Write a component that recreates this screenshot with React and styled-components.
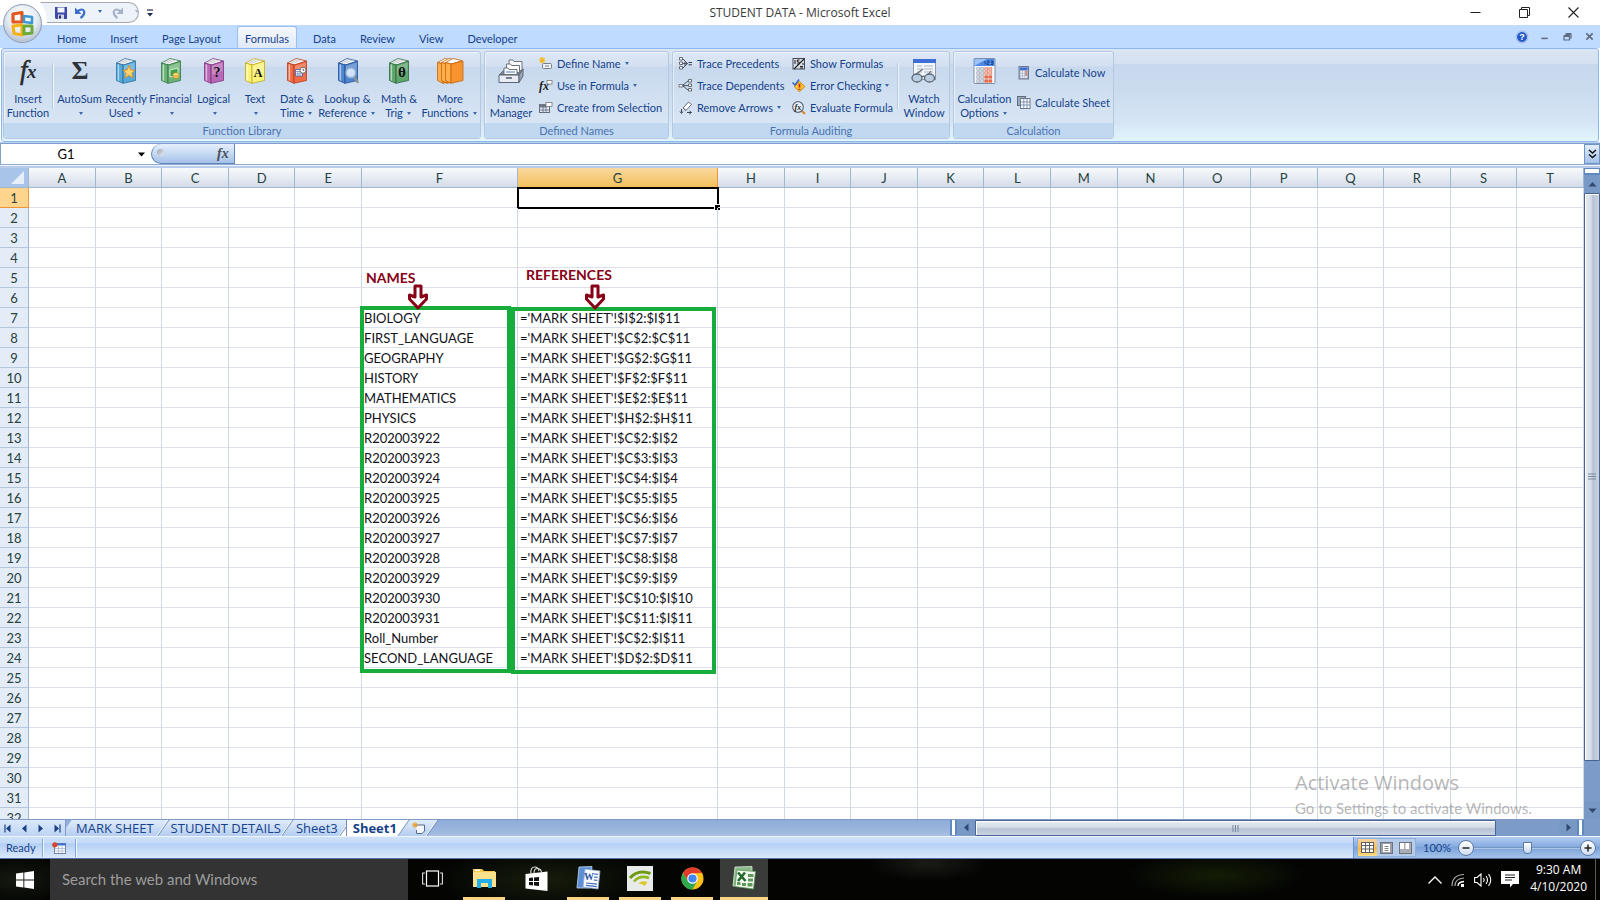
import React, { Fragment } from 'react';
import styled, { createGlobalStyle } from 'styled-components';

const GlobalStyle = createGlobalStyle`
    * { box-sizing: border-box; }
    body { margin: 0; background: #fff; overflow: hidden; }
    button, input { font: inherit; color: inherit; border: 0; padding: 0; margin: 0; background: none; outline: none; }
    svg { display: block; flex: none; overflow: visible; }
`

const Window = styled.div`
    display: flex;
    flex-direction: column;
    height: 100vh;
    position: relative;
    font-family: Lato, 'Open Sans', sans-serif;
    font-size: 11px;
    color: #15428b;
`

/* ---------- title bar ---------- */

const TitleBar = styled.header`
    display: grid;
    grid-template-columns: 1fr auto 1fr;
    align-items: center;
    height: 25px;
    flex: none;
    background: #fff;
`

const QuickAccess = styled.div`
    display: flex;
    align-items: center;
    height: 25px;
    padding-left: 40px;
    gap: 8px;
`

const QuickPill = styled.div`
    display: flex;
    align-items: center;
    gap: 8px;
    width: 99px;
    height: 21px;
    padding-left: 14px;
    background: #eef3fa;
    border: 1px solid #a5a9af;
    border-left-color: transparent;
    border-radius: 0 11px 11px 0;
    clip-path: polygon(0 0, 100% 0, 100% 100%, 7px 100%, 6px 50%);
`

const Title = styled.h1`
    margin: 0;
    font: 400 12px/24px 'Open Sans', sans-serif;
    color: #3a3a3a;
`

const WindowButtons = styled.div`
    display: flex;
    justify-content: flex-end;
    align-items: center;
    align-self: center;
    gap: ${props => props.$gap}px;
    padding-right: ${props => props.$right}px;
    margin-left: auto;
`

const OfficeButton = styled.button`
    position: absolute;
    left: 3px;
    top: 4px;
    width: 39px;
    height: 39px;
    border-radius: 50%;
    border: 1px solid #8d9bb0;
    background: radial-gradient(circle at 50% 35%, #fff 10%, #e3e9f2 50%, #b9c5d8 75%, #f4f7fb 100%);
    display: flex;
    align-items: center;
    justify-content: center;
    z-index: 2;
`

/* ---------- ribbon ---------- */

const TabBar = styled.nav`
    display: flex;
    align-items: flex-end;
    height: 23px;
    flex: none;
    padding-left: 45px;
    background: #bfdbff;
`

const RibbonTab = styled.button`
    height: 22px;
    padding: 2px 12px 0;
    font-size: 11px;
    ${props => props.$active && `
        margin: 0 4px;
        padding: 2px 7px 0;
        position: relative;
        background: linear-gradient(#f6f9fe, #dfe9f6);
        border: 1px solid #9cbfee;
        border-bottom: 0;
        border-radius: 3px 3px 0 0;
    `}
`

const Ribbon = styled.section`
    display: flex;
    gap: 3px;
    height: 94px;
    flex: none;
    margin: 0 1px;
    padding: 2px 1px;
    border: 1px solid #8db8ec;
    border-radius: 3px;
    background: linear-gradient(#dbe6f4 0, #d4e0f0 16%, #c7d8ed 17%, #cbdcef 45%, #d5e5f5 80%, #e2f6fe 100%);
`

const RibbonEdge = styled.div`
    height: 2px;
    flex: none;
    background: linear-gradient(#bad0ee 50%, #7fa0cc 50%);
`

const Group = styled.div`
    display: flex;
    flex-direction: column;
    border: 1px solid #b4c8e0;
    border-radius: 3px;
    box-shadow: inset 1px 1px 0 rgba(255, 255, 255, .5);
    background: linear-gradient(#dde8f5 0, #d3e0f1 16%, #c8d9ee 18%, #d0dff1 50%, #dbe8f6 100%);
`

const GroupBody = styled.div`
    display: flex;
    height: 71px;
    padding: 0 2px;
`

const GroupLabel = styled.div`
    height: 15px;
    line-height: 15px;
    text-align: center;
    color: #4a72b0;
    background: #c1d8f1;
    border-radius: 0 0 3px 3px;
`

const BigButton = styled.button`
    display: flex;
    flex-direction: column;
    align-items: center;
    width: ${props => props.$width}px;
    padding-top: 6px;
    line-height: 14px;
    white-space: nowrap;
`

const BigIcon = styled.span`
    display: flex;
    justify-content: center;
    height: 26px;
    margin-bottom: 8px;
`

const Divider = styled.span`
    width: 2px;
    height: 46px;
    margin: 11px 2px 0;
    background: linear-gradient(90deg, #b7cae2 50%, #eef5fd 50%);
`

const SmallColumn = styled.div`
    display: flex;
    flex-direction: column;
    justify-content: ${props => props.$spread ? 'center' : 'flex-start'};
    gap: ${props => props.$spread ? '8px' : '0'};
    width: ${props => props.$width}px;
    padding-left: 4px;
`

const SmallButton = styled.button`
    display: flex;
    align-items: center;
    gap: 5px;
    height: 22px;
    white-space: nowrap;
`

const Caret = styled.i`
    display: inline-block;
    border: 2px solid transparent;
    border-top: 3px solid ${props => props.$color || '#3f66a8'};
    border-bottom: 0;
    margin: 0 2px 2px 4px;
    vertical-align: middle;
`

/* ---------- formula bar ---------- */

const FormulaBar = styled.div`
    display: flex;
    height: 20px;
    flex: none;
    background: #fff;
    border-left: 1px solid #7fa0cc;
`

const NameBox = styled.input`
    width: 130px;
    text-align: center;
    font-size: 13px;
    color: #000;
`

const NameCaret = styled.button`
    width: 20px;
`

const FxBox = styled.div`
    display: flex;
    align-items: center;
    justify-content: space-between;
    width: 84px;
    padding: 0 6px 0 5px;
    border: 1px solid #5f87bb;
    border-width: 0 1px 1px;
    border-radius: 11px 0 0 11px;
    background: linear-gradient(#e6effb, #c6d9f3 50%, #a6c1e8);
`

const Knob = styled.span`
    width: 7px;
    height: 7px;
    margin-bottom: 2px;
    border-radius: 50%;
    background: linear-gradient(135deg, #9ea6b3, #e6ebf2);
`

const FormulaInput = styled.input`
    flex: 1;
    min-width: 0;
    padding: 0 4px;
    font-size: 13px;
    color: #000;
`

const ExpandButton = styled.button`
    display: flex;
    align-items: center;
    justify-content: center;
    width: 16px;
    border: 1px solid #6d93c8;
    background: linear-gradient(#e3edfa, #a5c0e8);
`

const BarEdge = styled.div`
    height: 4px;
    flex: none;
    background: linear-gradient(#8fabd2 25%, #edf4fd 25%, #edf4fd 50%, #b9cdea 50%);
`

/* ---------- sheet ---------- */

const SheetArea = styled.main`
    display: flex;
    flex: 1;
    min-height: 0;
`

const SheetView = styled.div`
    flex: 1;
    position: relative;
    overflow: hidden;
    background: #fff;
`

const Grid = styled.table`
    width: 100%;
    table-layout: fixed;
    border-collapse: separate;
    border-spacing: 0;
    font-size: 13px;
    line-height: 18px;
`

const Corner = styled.th`
    padding: 0;
    background: #a9c4e9;
    border-right: 1px solid #9eb6ce;
    border-bottom: 1px solid #9eb6ce;
`

const CornerMark = styled.span`
    display: block;
    width: 13px;
    height: 13px;
    margin-left: 11px;
    background: #e6eef9;
    clip-path: polygon(100% 0, 100% 100%, 0 100%);
`

const ColumnHead = styled.th`
    height: 20px;
    padding: 1px 0 0;
    font-weight: 400;
    color: #27413e;
    background: ${props => props.$on ? 'linear-gradient(#f9d99f, #f3c05c)' : 'linear-gradient(#f8fafc, #e3e9f1 60%, #d3dbe8)'};
    border-right: 1px solid ${props => props.$on ? '#f29536' : '#9eb6ce'};
    border-bottom: 1px solid ${props => props.$on ? '#f29536' : '#9eb6ce'};
`

const RowHead = styled.th`
    height: 20px;
    padding: 1px 0 0;
    font-weight: 400;
    color: #27413e;
    background: ${props => props.$on ? '#ffd58d' : '#e4ecf7'};
    border-right: 1px solid ${props => props.$on ? '#f29536' : '#9eb6ce'};
    border-bottom: 1px solid ${props => props.$on ? '#f29536' : '#b6c6dc'};
`

const Cell = styled.td`
    height: 20px;
    padding: 1px 0 0 2px;
    color: #101018;
    white-space: nowrap;
    border-right: 1px solid #d0d7e5;
    border-bottom: 1px solid #dce0ea;
    position: relative;
`

const Selection = styled.span`
    position: absolute;
    inset: -1px -2px -2px -1px;
    border: 2px solid #000;
    &::after {
        content: '';
        position: absolute;
        right: -3px;
        bottom: -3px;
        width: 5px;
        height: 5px;
        background: #000;
        border: 1px solid #fff;
        border-width: 1px 0 0 1px;
    }
`

// drawn over the cells, like shapes inserted on the sheet
const GreenBox = styled.div`
    position: absolute;
    left: ${props => props.$left}px;
    top: ${props => props.$top}px;
    width: ${props => props.$width}px;
    height: 367px;
    border: 4px solid #16ad3c;
`

const Callout = styled.div`
    position: absolute;
    left: ${props => props.$left}px;
    top: ${props => props.$top}px;
    font-size: 14px;
    line-height: 18px;
    font-weight: 700;
    color: #880015;
`

const CalloutArrow = styled.svg`
    position: absolute;
    left: ${props => props.$left}px;
    top: 116px;
`

const Watermark = styled.div`
    position: absolute;
    right: 52px;
    bottom: 0;
    width: 237px;
    color: rgba(120, 120, 120, .55);
    font-size: 15px;
    line-height: 22px;
    white-space: nowrap;
`

const WatermarkTitle = styled.div`
    font: 400 20px/28px 'Open Sans', sans-serif;
`

const VScroll = styled.div`
    display: flex;
    flex-direction: column;
    width: 16px;
    background: #7c9bc8;
`

const Splitter = styled.span`
    flex: none;
    width: ${props => props.$vertical ? '7px' : '16px'};
    height: ${props => props.$vertical ? '15px' : '7px'};
    background: #fff;
    border: 2px solid #5f8ac0;
    border-width: ${props => props.$vertical ? '0 2px' : '1px 1px 2px'};
`

const ScrollButton = styled.button`
    display: flex;
    align-items: center;
    justify-content: center;
    flex: none;
    width: ${props => props.$width}px;
    height: ${props => props.$height}px;
    background: #7898c6;
`

const Thumb = styled.div`
    display: flex;
    align-items: center;
    justify-content: center;
    flex: ${props => props.$grow} 1 0;
    border: 1px solid #48638f;
    border-radius: 1px;
    background: linear-gradient(${props => props.$angle}, #e9edf3, #d4dbe5 45%, #b6c3d6 55%, #c9d3e2);
    box-shadow: inset 1px 1px 0 #fff;
`

const Track = styled.div`
    flex: ${props => props.$grow} 1 0;
`

/* ---------- sheet tabs ---------- */

const SheetBar = styled.div`
    display: flex;
    height: 17px;
    flex: none;
    border-top: 1px solid #7d9bc6;
    background: linear-gradient(#8fadd9, #9cb7de 70%, #a9c1e4);
`

const SheetNav = styled.div`
    display: flex;
    align-items: center;
    justify-content: space-around;
    width: 66px;
    z-index: 2;
    border-right: 1px solid #7d9bc6;
    background: linear-gradient(#dbe9fb, #bcd4f4);
`

const SheetTab = styled.button`
    position: relative;
    padding: 0 ${props => props.$pad}px;
    font: ${props => props.$active ? 700 : 400} 13px/15px 'Open Sans', sans-serif;
    white-space: nowrap;
    z-index: ${props => props.$active ? 1 : 0};
    &::before {
        content: '';
        position: absolute;
        inset: 0;
        z-index: -1;
        transform: skewX(-35deg);
        background: ${props => props.$active ? '#fff' : 'linear-gradient(#e0ecfb, #b5cdf0)'};
        border-right: 1px solid #7590b8;
        box-shadow: inset -1px 0 0 #fff;
    }
    &::after {
        content: '';
        position: absolute;
        inset: 0 50% 0 0;
        z-index: -1;
        background: ${props => props.$active ? '#fff' : 'none'};
        border-left: ${props => props.$active ? '1px solid #7590b8' : '0'};
    }
`

const HScroll = styled.div`
    display: flex;
    width: calc(40% + 10px);
    margin-left: auto;
    padding-right: 16px;
    background: #7c9bc8;
`

/* ---------- status bar ---------- */

const StatusBar = styled.footer`
    display: flex;
    align-items: center;
    height: 23px;
    flex: none;
    border-top: 1px solid #eef5fe;
    border-bottom: 1px solid #56739f;
    background: linear-gradient(#cfe1f9, #c3daf7 30%, #b1cef4 32%, #c4daf6 60%, #d9e8fb);
`

const StatusItem = styled.div`
    display: flex;
    align-items: center;
    height: 18px;
    padding: 0 ${props => props.$pad}px;
    border-right: 1px solid #86a7d4;
    box-shadow: 1px 0 0 #eef5fe;
`

const ZoomArea = styled.div`
    display: flex;
    align-items: center;
    width: 247px;
    height: 21px;
    margin-left: auto;
    padding: 0 4px 0 3px;
    border-left: 1px solid #6f93c8;
    background: linear-gradient(#b3cdf1, #87acdf 45%, #7ba3da 50%, #a5c3ea);
`

const Views = styled.div`
    display: flex;
    height: 19px;
    border: 1px solid #8fb0dd;
    background: #b4cbea;
`

const ViewButton = styled.button`
    display: flex;
    align-items: center;
    justify-content: center;
    width: 19px;
    background: ${props => props.$on ? 'linear-gradient(#f6d3a2, #fbb84b 60%, #ffe08a)' : 'none'};
`

const ZoomLabel = styled.label`
    width: 42px;
    text-align: center;
`

const RoundButton = styled.button`
    display: flex;
    align-items: center;
    justify-content: center;
    width: 16px;
    height: 16px;
    flex: none;
    border: 1px solid #5b79a6;
    border-radius: 50%;
    background: linear-gradient(#fff, #cfddf0);
`

const ZoomSlider = styled.input`
    flex: 1;
    min-width: 0;
    height: 14px;
    appearance: none;
    background: linear-gradient(#5c7fb4, #c9dcf5) no-repeat 0 6px / 100% 2px;
    &::-webkit-slider-thumb {
        appearance: none;
        width: 9px;
        height: 12px;
        background: linear-gradient(#fff, #c6d6ec);
        border: 1px solid #5b79a6;
        border-radius: 1px 1px 5px 5px;
    }
`

/* ---------- taskbar ---------- */

const Taskbar = styled.div`
    display: flex;
    height: 41px;
    flex: none;
    color: #fff;
    background:
        radial-gradient(ellipse 60px 18px at 58% 10%, rgba(60, 60, 50, .4), transparent),
        radial-gradient(ellipse 90px 22px at 76% 40%, rgba(30, 44, 8, .6), transparent),
        radial-gradient(ellipse 110px 30px at 34% 50%, rgba(26, 34, 14, .8), transparent),
        radial-gradient(ellipse 60px 24px at 1% 50%, rgba(22, 28, 16, .9), transparent),
        #040503;
`

const StartButton = styled.button`
    display: flex;
    align-items: center;
    justify-content: center;
    width: 50px;
`

const SearchInput = styled.input`
    width: 358px;
    padding: 0 12px 2px;
    font-size: 15px;
    color: #fff;
    background: #333;
    &::placeholder { color: #9d9d9d; opacity: 1; }
`

const TaskButtons = styled.div`
    display: flex;
    gap: 4px;
`

const TaskButton = styled.button`
    display: flex;
    align-items: center;
    justify-content: center;
    width: 48px;
    border-bottom: 3px solid transparent;
    background: ${props => props.$active ? '#393c38' : 'none'};
    position: relative;
    &::after {
        content: '';
        display: ${props => props.$open || props.$active ? 'block' : 'none'};
        position: absolute;
        left: ${props => props.$active ? 0 : '3px'};
        right: ${props => props.$active ? 0 : '3px'};
        bottom: -3px;
        height: 3px;
        background: #fbd581;
    }
`

const Tray = styled.div`
    display: flex;
    align-items: center;
    margin-left: auto;
    gap: 9px;
    padding-right: 4px;
`

const Clock = styled.div`
    height: 41px;
    font: 400 12px/17px 'Open Sans', sans-serif;
    text-align: center;
    padding: 2px 8px 0 0;
    margin-left: 2px;
    border-right: 1px solid #5a5a5a;
`

/* ---------- icons ---------- */

const Book = ({ fill, dark, children }) => (
    <svg width="20" height="26" viewBox="0 0 20 26">
        <path d="M0.5 5 L9 0.5 L19.5 3 L8 7 Z" fill="#fdfdfd" stroke={dark} strokeWidth="0.8" />
        <path d="M4 4.6 L11 1.6 M6 5.4 L14 2.2" stroke="#9aa4b0" strokeWidth="0.6" />
        <path d="M0.5 5 L7 7 V25.3 L0.5 22.5 Z" fill={fill} stroke={dark} strokeWidth="0.8" />
        <path d="M2.4 6.4 V22.6" stroke="#fff" strokeOpacity="0.55" strokeWidth="1.4" />
        <path d="M7 7 L19.5 3.2 V22.5 L7 25.3 Z" fill={fill} stroke={dark} strokeWidth="0.8" />
        <path d="M8 8 L18.6 4.6 V13 L8 17 Z" fill="#fff" fillOpacity="0.22" />
        {children}
    </svg>
);

const Glyph = ({ size, children, fill }) => (
    <text x="13" y="19" textAnchor="middle" fontFamily="Liberation Serif" fontWeight="700" fontSize={size} fill={fill || '#111'}>{children}</text>
);

const FxIcon = () => (
    <svg width="24" height="26" viewBox="0 0 24 26">
        <text x="4" y="21" fontFamily="Liberation Serif" fontStyle="italic" fontSize="27" fill="#2b2b2b" stroke="#2b2b2b" strokeWidth="0.5">f</text>
        <text x="11" y="20" fontFamily="Liberation Serif" fontStyle="italic" fontWeight="700" fontSize="19" fill="#2b2b2b">x</text>
    </svg>
);

const SigmaIcon = () => (
    <svg width="20" height="26" viewBox="0 0 20 26">
        <text x="10" y="21" textAnchor="middle" fontFamily="Liberation Serif" fontWeight="700" fontSize="26" fill="#2f3338">Σ</text>
    </svg>
);

const StarBook = () => (
    <Book fill="#56a9d8" dark="#2c6f9f">
        <path d="M13 7.5 L14.8 12 L19 12.2 L15.8 15.2 L17 20 L13 17.2 L9 20 L10.2 15.2 L7 12.2 L11.2 12 Z" fill="#ffd36b" stroke="#e08a1c" strokeWidth="0.9" />
    </Book>
);

const MoneyBook = () => (
    <Book fill="#6fb277" dark="#2f7a42">
        <path d="M9 12 L17 10 V17 L9 19 Z" fill="#3f9f4c" stroke="#dff2d8" strokeWidth="0.9" />
        <ellipse cx="15" cy="18.5" rx="3" ry="1.8" fill="#ffd257" stroke="#b3861b" strokeWidth="0.7" />
        <ellipse cx="15" cy="16.4" rx="3" ry="1.6" fill="#ffe58a" stroke="#b3861b" strokeWidth="0.7" />
    </Book>
);

const DateBook = () => (
    <Book fill="#ee6b45" dark="#b93a1b">
        <path d="M8.5 11.5 H15.5 V18 H8.5 Z" fill="#fff" stroke="#3c5ea8" strokeWidth="0.8" />
        <path d="M8.5 13.5 H15.5 M10.8 13 V18 M13 13 V18 M8.5 15.8 H15.5" stroke="#5b7fc4" strokeWidth="0.7" />
        <circle cx="16" cy="12.2" r="3" fill="#fff" stroke="#555" strokeWidth="0.8" />
        <path d="M16 10.6 V12.3 H17.4" stroke="#222" strokeWidth="0.7" fill="none" />
    </Book>
);

const LookupBook = () => (
    <Book fill="#4f86d0" dark="#244f94">
        <path d="M15.8 18.4 L19.6 24" stroke="#8d8f96" strokeWidth="2.4" strokeLinecap="round" />
        <circle cx="12.8" cy="14.8" r="4.8" fill="#cfe3fb" stroke="#9fb2cc" strokeWidth="1.5" />
    </Book>
);

const MoreBooks = () => (
    <svg width="27" height="26" viewBox="0 0 27 26">
        {[0, 4, 8].map(x => (
            <g key={x} transform={`translate(${x} 0)`}>
                <path d="M0.5 4.5 L8 0.5 L17 2.5 L7 6 Z" fill="#fff" stroke="#c4650c" strokeWidth="0.8" />
                <path d="M0.5 4.5 L6 6 V25.3 L0.5 22.5 Z" fill="#ffae4a" stroke="#c4650c" strokeWidth="0.8" />
                <path d="M6 6 L18 3 V22.5 L6 25.3 Z" fill="#f9932f" stroke="#c4650c" strokeWidth="0.8" />
            </g>
        ))}
    </svg>
);

const NameManagerIcon = () => (
    <svg width="26" height="26" viewBox="0 0 26 26">
        <path d="M1 17 L7 11 H25 L22 17 Z" fill="#7e8796" stroke="#555e6d" strokeWidth="0.8" />
        <path d="M11 2 h4 l1 1.5 h8 v9 h-13 z" fill="#f7f8fa" stroke="#6e7581" />
        <path d="M8.5 6 h4 l1 1.5 h8 v7 h-13 z" fill="#fff" stroke="#6e7581" />
        <path d="M6 10 h4 l1 1.5 h8 v5 h-13 z" fill="#fff" stroke="#6e7581" />
        <path d="M8 14 H17" stroke="#4d79c0" />
        <path d="M1 17 H21 V24.5 H1 Z" fill="#e9edf3" stroke="#5d6676" />
        <path d="M21 17 L25 11 V18 L21 24.5 Z" fill="#9aa4b4" stroke="#5d6676" />
        <path d="M8 20 H14" stroke="#5d6676" strokeWidth="1.6" />
    </svg>
);

const WatchIcon = () => (
    <svg width="26" height="26" viewBox="0 0 26 26">
        <rect x="2.5" y="1.5" width="22" height="20" fill="#f3f6fa" stroke="#8d9bb0" />
        <rect x="2" y="1" width="23" height="4" fill="#3d6fd6" />
        <path d="M6 8 H11 M13 8 H22 M6 11 H11 M13 11 H22 M13 14 H22 M6 14 H11" stroke="#a8b4c6" />
        <path d="M4 17 L12 11 M16 18 L20 13" stroke="#666d78" strokeWidth="1.2" />
        <ellipse cx="6" cy="20" rx="5" ry="4" fill="#b9cde0" stroke="#5b6572" strokeWidth="1.3" />
        <ellipse cx="18.5" cy="20" rx="5" ry="4" fill="#b9cde0" stroke="#5b6572" strokeWidth="1.3" />
        <path d="M11 19 q1.3 -1.6 2.6 0" fill="none" stroke="#5b6572" strokeWidth="1.3" />
    </svg>
);

const CalcOptionsIcon = () => (
    <svg width="23" height="26" viewBox="0 0 23 26">
        <rect x="1" y="0.5" width="21" height="25" rx="1" fill="#f6f8fb" stroke="#7d8fae" />
        <rect x="1.5" y="1" width="20" height="7" fill="#4d8be6" />
        <path d="M2 7.5 L14 1 H2 Z" fill="#9cc4fa" />
        <path d="M12 3 V6.500 M14 3 H16 V4.700 H14 V6.500 H16.200 M17.800 3 H20 V6.500 H17.800 M18 4.700 H20" fill="none" stroke="#153f86" strokeWidth="0.900" />
        {[10, 14, 18, 22].map(y => [3, 7, 11, 15].map(x => (
            <rect key={`${x}-${y}`} x={x + 0.8} y={y - 0.2} width="3" height="2.4" fill={x > 10 ? (y > 15 ? '#ef6a4c' : '#f8c9b8') : '#dfe4ec'} stroke={x > 10 ? '#d9603f' : '#8b95a5'} strokeWidth="0.6" />
        )))}
    </svg>
);

const smallIcons = {
    define: <Fragment><rect x="3.5" y="6.5" width="9" height="5" rx="1" fill="#eef1f6" stroke="#7a7f88" /><path d="M6 9 H10" stroke="#7a7f88" /><path d="M3 0 V6.5 M0 3.2 H6.5 M1 1 L5.5 5.5 M5.5 1 L1 5.5" stroke="#f5b81c" strokeWidth="1.1" /></Fragment>,
    use: <Fragment><text x="0" y="11" fontFamily="Liberation Serif" fontStyle="italic" fontWeight="700" fontSize="12" fill="#222">fx</text><rect x="8" y="1.5" width="5" height="3.5" fill="#fff" stroke="#777" strokeWidth="0.8" /></Fragment>,
    create: <Fragment><rect x="0.5" y="3.5" width="10" height="8" fill="#e5eaf2" stroke="#5f6b7e" /><rect x="0.5" y="3" width="7" height="3.5" fill="#6e7888" /><path d="M1 9 H10 M4 4 V11 M7 4 V11" stroke="#5f6b7e" strokeWidth="0.8" /><rect x="7" y="1.5" width="6" height="4" fill="#fff" stroke="#777" strokeWidth="0.8" /></Fragment>,
    precedents: <Fragment><path d="M0.5 0.5 h3 v2.5 h-3 z M0.5 5 h3 v2.5 h-3 z M0.5 9.5 h3 v2.5 h-3 z" fill="#fff" stroke="#555d68" strokeWidth="0.9" /><path d="M4 2 L8 6 M4 11 L8 7 M4 6.6 H9 M6 4.5 V8.7" stroke="#39404a" strokeWidth="0.9" /><path d="M9.5 5.5 H13 M9.5 7.8 H13" stroke="#39404a" /></Fragment>,
    dependents: <Fragment><path d="M9.5 0.5 h3 v2.5 h-3 z M9.5 5 h3 v2.5 h-3 z M9.5 9.5 h3 v2.5 h-3 z" fill="#fff" stroke="#555d68" strokeWidth="0.9" /><path d="M4 6 L9 2 M4 7 L9 11 M4 6.6 H9" stroke="#39404a" strokeWidth="0.9" /><path d="M0 5.5 H3.5 V8 H0 Z" fill="#fff" stroke="#555d68" strokeWidth="0.8" /></Fragment>,
    remove: <Fragment><path d="M4 7 L9.5 1 L12.5 3.5 L7 9.5 Z" fill="#fff" stroke="#666d78" /><path d="M4 7 L7 9.5" stroke="#666d78" /><path d="M2.5 8 V11.5 M1 10.5 L2.5 12.5 L4 10.5 M8 11.5 H12 M10.5 10 L12.5 11.5 L10.5 13" stroke="#39404a" fill="none" /></Fragment>,
    show: <Fragment><rect x="1" y="1.5" width="11.5" height="10.5" fill="#d8dde5" stroke="#444b56" /><path d="M3 3 V7 M7.5 3 H5.300 V5 H7.200 V7 H5" fill="none" stroke="#222" /><path d="M2 12 L12 2" stroke="#222" strokeWidth="1.1" /><path d="M8 9.5 h3 M8 11 h3 M10 7 h2" stroke="#222" /></Fragment>,
    error: <Fragment><path d="M7.5 2.5 L12.8 7.5 L7.5 12.8 L2.2 7.5 Z" fill="#ffc62e" stroke="#c98209" /><path d="M7.5 4.8 V8.6 M7.5 9.8 V11" stroke="#d0201a" strokeWidth="1.8" /><path d="M0.5 3.5 L3 6 L7 0.5" fill="none" stroke="#3b69c6" strokeWidth="1.6" /></Fragment>,
    evaluate: <Fragment><path d="M9.5 9.5 L13 13" stroke="#d98a2c" strokeWidth="2.2" /><circle cx="6" cy="6" r="5.3" fill="#eaf3fc" stroke="#5f6b7e" strokeWidth="1.2" /><text x="2.5" y="9" fontFamily="Liberation Serif" fontStyle="italic" fontWeight="700" fontSize="8" fill="#222">fx</text></Fragment>,
    calcNow: <Fragment><rect x="2" y="0.5" width="9.5" height="12.5" fill="#a7b4c8" stroke="#6d7a90" /><rect x="3" y="1.5" width="7.5" height="2.5" fill="#3d6fd6" /><path d="M3.5 6 H10 M3.5 8.5 H10 M3.5 11 H10" stroke="#fff" strokeWidth="1.6" strokeDasharray="1.6 0.8" /><path d="M8.3 6 H10 M8.3 8.5 H10" stroke="#e0533a" strokeWidth="1.6" /></Fragment>,
    calcSheet: <Fragment><rect x="0.5" y="0.5" width="8" height="9" fill="#9aa8c0" stroke="#5f6b7e" /><rect x="3.5" y="2.5" width="9.5" height="10" fill="#fff" stroke="#6d7a90" /><path d="M4 6 H13 M4 9 H13 M6.8 3 V12 M10 3 V12" stroke="#7f93b8" /></Fragment>,
};

const Arrow = ({ dir, bar, color = '#1a3f80' }) => {
    const turn = { right: 0, down: 90, left: 180, up: 270 }[dir];
    return (
        <svg width="9" height="9" viewBox="0 0 9 9">
            <g transform={`rotate(${turn} 4.5 4.5)`}>
                <path d="M2.5 0.5 L7 4.5 L2.5 8.5 Z" fill={color} />
                {bar && <path d="M8 0.5 V8.5" stroke={color} strokeWidth="1.2" />}
            </g>
        </svg>
    );
};

const OfficeLogo = () => (
    <svg width="25" height="27" viewBox="0 0 25 27">
        <path d="M3 4 L12 2.500 V12 L3 12 Z" fill="none" stroke="#e2571e" strokeWidth="3.200" strokeLinejoin="round" />
        <path d="M14 6 L22 7 V13 L14 12 Z" fill="none" stroke="#3e97d3" strokeWidth="2.6" strokeLinejoin="round" />
        <path d="M3 16 L12 15 V25 L4 23.500 Z" fill="none" stroke="#f5b21b" strokeWidth="3.200" strokeLinejoin="round" />
        <path d="M14 16 L22 16 V23 L14 24 Z" fill="none" stroke="#6cab3a" strokeWidth="3" strokeLinejoin="round" />
    </svg>
);

const SaveIcon = () => (
    <svg width="12" height="12" viewBox="0 0 12 12">
        <path d="M0 0 H12 V12 H1 L0 11 Z" fill="#4049a8" />
        <rect x="2.5" y="0.5" width="7" height="5" fill="#f2f5fb" />
        <rect x="3" y="7.5" width="6" height="4.5" fill="#cfd5e6" />
        <rect x="4" y="8.5" width="2" height="3" fill="#262c66" />
    </svg>
);

const UndoIcon = ({ flip }) => (
    <svg width="11" height="12" viewBox="0 0 11 12">
        <g transform={flip ? 'translate(11 0) scale(-1 1)' : undefined}>
            <path d="M2 4.5 Q8 0.5 9.2 4.5 Q9.6 8 5.5 11" fill="none" stroke={flip ? '#a3b2c8' : '#3b6fc9'} strokeWidth="2.2" />
            <path d="M0 0.5 V7 H6.5 Z" fill={flip ? '#a3b2c8' : '#3b6fc9'} />
        </g>
    </svg>
);

const MinIcon = ({ small }) => <svg width={small ? 7 : 11} height="11" viewBox="0 0 11 11"><path d={small ? 'M-1 8.5 H9' : 'M0.5 5.5 H10.5'} stroke={small ? '#5e6b80' : '#222'} strokeWidth={small ? 2.4 : 1} /></svg>;

const RestoreIcon = () => (
    <svg width="11" height="11" viewBox="0 0 11 11">
        <path d="M0.5 2.5 H8.5 V10.5 H0.5 Z M2.5 2.5 V0.5 H10.5 V8.5 H8.5" fill="none" stroke="#222" />
    </svg>
);

const SmallRestoreIcon = () => (
    <svg width="9" height="8" viewBox="0 0 9 8">
        <path d="M1 3 H6.5 V7 H1 Z M3 3 V1 H8 V5 H7" fill="none" stroke="#5e6b80" strokeWidth="1.2" />
        <path d="M1 3 H6.5 M3 1 H8" stroke="#5e6b80" strokeWidth="2" />
    </svg>
);

const CloseIcon = ({ small }) => (
    <svg width={small ? 7 : 11} height={small ? 7 : 11} viewBox="0 0 11 11">
        <path d="M0.5 0.5 L10.5 10.5 M10.5 0.5 L0.5 10.5" stroke={small ? '#5e6b80' : '#222'} strokeWidth={small ? 2.6 : 1.1} />
    </svg>
);

const HelpIcon = () => (
    <svg width="12" height="12" viewBox="0 0 12 12">
        <circle cx="6" cy="6" r="5.5" fill="#2358c8" stroke="#dfeafb" />
        <circle cx="6" cy="6" r="5.9" fill="none" stroke="#6c8fc8" strokeWidth="0.5" />
        <text x="6" y="9.2" textAnchor="middle" fontFamily="Liberation Sans" fontWeight="700" fontSize="9" fill="#fff">?</text>
    </svg>
);

const WordIcon = () => (
    <svg width="25" height="24" viewBox="0 0 25 24">
        <path d="M3 1 L16 0.5 L14 22 H1 Z" fill="#5d8fd6" stroke="#c9dcf3" strokeWidth="0.8" />
        <path d="M9 3 L24 5 L22 23 L7 21 Z" fill="#fbfcff" stroke="#8aa9d8" strokeWidth="0.8" />
        <path d="M18 8 L22 8.4 M18 11 L21.7 11.4 M17.6 14 L21.4 14.4 M10 17 L21 18.2 M10 19.4 L20.8 20.6" stroke="#3c68b8" strokeWidth="1.2" />
        <text x="13" y="14" textAnchor="middle" fontFamily="Liberation Serif" fontWeight="700" fontSize="10" fill="#2a56a8">W</text>
    </svg>
);

const ExcelIcon = () => (
    <svg width="24" height="24" viewBox="0 0 24 24">
        <path d="M3 1 L20 0.5 L20 20 L1 20 Z" fill="#8cb98c" stroke="#d8ead5" strokeWidth="0.8" />
        <path d="M5 4 L23.5 5.5 L21.5 23 L3 20.5 Z" fill="#f5faf3" stroke="#5c9a58" strokeWidth="0.8" />
        <path d="M16 8 h5.5 v3 h-5.5 z M16 12.5 h5 v3 h-5 z M15.5 17 h5 v3.5 h-5 z M10 17 h4 v3 h-4 z M5 16 h3.5 v3 h-3.5 z" fill="#5c9a58" />
        <path d="M6 6.5 L13.5 15 M13 6.5 L6 15" stroke="#246a2c" strokeWidth="2.6" />
    </svg>
);

const WifiAppIcon = () => (
    <svg width="26" height="25" viewBox="0 0 26 25">
        <rect width="26" height="25" fill="#e9ebea" />
        <path d="M3 12 Q11 3 23.500 7.500" fill="none" stroke="#6d9a10" strokeWidth="3.2" />
        <path d="M7 15.500 Q13 8.500 22 12" fill="none" stroke="#8fb81a" strokeWidth="2.6" />
        <path d="M11 17.500 Q15 14 20.5 16 L17.5 20 Q15 17 11 17.500" fill="#dcc72a" />
    </svg>
);

const ChromeIcon = () => (
    <svg width="23" height="23" viewBox="0 0 24 24">
        <circle cx="12" cy="12" r="11.5" fill="#fbc116" />
        <path d="M2.040 6.250 A11.5 11.5 0 0 1 21.960 6.250 L12 6.5 L7.2 14.7 Z" fill="#e33b2e" />
        <path d="M2.040 6.250 A11.5 11.5 0 0 0 12 23.5 L16.8 14.7 L7.2 14.7 Z" fill="#2da94f" />
        <circle cx="12" cy="12" r="5.5" fill="#fff" />
        <circle cx="12" cy="12" r="4.3" fill="#4285f4" />
    </svg>
);

const ExplorerIcon = () => (
    <svg width="23" height="20" viewBox="0 0 23 20">
        <path d="M0 1 H9 L11 3 H22 V19 H0 Z" fill="#f5c84b" />
        <rect x="0" y="4" width="23" height="15" fill="#fde08a" />
        <path d="M4 20 V11 H19 V20 H15 V15 H8 V20 Z" fill="#22aee8" />
        <rect x="2" y="1.5" width="5" height="1.5" fill="#fff" />
    </svg>
);

const StoreIcon = () => (
    <svg width="23" height="25" viewBox="0 0 23 25">
        <path d="M0.5 8 L22.5 5.5 V25 L0.5 22.5 Z" fill="#fff" />
        <path d="M6 8 Q5 1 10 1 Q13 1 14 5 M9 7 Q9 2 13 2.5 Q16 3 16.5 6" fill="none" stroke="#ddd" strokeWidth="1.1" />
        <path d="M4 12 L8 11.6 V15 H4 Z M9 11.5 L14 11 V15 H9 Z M4 16 H8 V19.4 L4 19 Z M9 16 H14 V20 L9 19.5 Z" fill="#111" />
    </svg>
);

const TaskViewIcon = () => (
    <svg width="21" height="17" viewBox="0 0 21 17">
        <rect x="4.5" y="1" width="12" height="15" fill="none" stroke="#fff" strokeWidth="1.2" />
        <path d="M3 3 H0.6 V14 H3 M18 3 H20.4 V14 H18" fill="none" stroke="#ddd" strokeWidth="1.1" />
    </svg>
);

const StartIcon = () => (
    <svg width="18" height="18" viewBox="0 0 18 18">
        <path d="M0 2.6 L7.4 1.6 V8.6 H0 Z M8.3 1.4 L18 0 V8.6 H8.3 Z M0 9.4 H7.4 V16.4 L0 15.4 Z M8.3 9.4 H18 V18 L8.3 16.6 Z" fill="#fff" />
    </svg>
);

const DownArrow = () => (
    <path d="M7 2 H13 V13 L18.5 11 V15 L10 24 L1.5 15 V11 L7 13 Z" fill="#fff" stroke="#880015" strokeWidth="3" strokeLinejoin="round" />
);

/* ---------- data ---------- */

const tabs = ['Home', 'Insert', 'Page Layout', 'Formulas', 'Data', 'Review', 'View', 'Developer'];

const library = [
    { icon: <SigmaIcon />, text: ['AutoSum', ''], width: 47 },
    { icon: <StarBook />, text: ['Recently', 'Used'], width: 46 },
    { icon: <MoneyBook />, text: ['Financial', ''], width: 43 },
    { icon: <Book fill="#b868b4" dark="#7c3580"><Glyph size="14">?</Glyph></Book>, text: ['Logical', ''], width: 43 },
    { icon: <Book fill="#fbf27a" dark="#c3a91b"><Glyph size="12">A</Glyph></Book>, text: ['Text', ''], width: 40 },
    { icon: <DateBook />, text: ['Date &', 'Time'], width: 44 },
    { icon: <LookupBook />, text: ['Lookup &', 'Reference'], width: 57 },
    { icon: <Book fill="#5fa56c" dark="#2c6b3c"><Glyph size="15">θ</Glyph></Book>, text: ['Math &', 'Trig'], width: 46 },
    { icon: <MoreBooks />, text: ['More', 'Functions'], width: 56 },
];

const columns = 'ABCDEFGHIJKLMNOPQRST'.split('');

const names = [
    ['BIOLOGY', '$I$2:$I$11'],
    ['FIRST_LANGUAGE', '$C$2:$C$11'],
    ['GEOGRAPHY', '$G$2:$G$11'],
    ['HISTORY', '$F$2:$F$11'],
    ['MATHEMATICS', '$E$2:$E$11'],
    ['PHYSICS', '$H$2:$H$11'],
    ['R202003922', '$C$2:$I$2'],
    ['R202003923', '$C$3:$I$3'],
    ['R202003924', '$C$4:$I$4'],
    ['R202003925', '$C$5:$I$5'],
    ['R202003926', '$C$6:$I$6'],
    ['R202003927', '$C$7:$I$7'],
    ['R202003928', '$C$8:$I$8'],
    ['R202003929', '$C$9:$I$9'],
    ['R202003930', '$C$10:$I$10'],
    ['R202003931', '$C$11:$I$11'],
    ['Roll_Number', '$C$2:$I$11'],
    ['SECOND_LANGUAGE', '$D$2:$D$11'],
];

const FIRST_ROW = 7;
const ROWS = 32;
const columnWidths = { F: 156, G: 200 };

const cellText = (row, col) => {
    const entry = names[row - FIRST_ROW];
    if (!entry) return null;
    if (col === 'F') return entry[0];
    if (col === 'G') return `='MARK SHEET'!${entry[1]}`;
    return null;
};

/* ---------- parts ---------- */

const Big = ({ icon, text, width, menu }) => (
    <BigButton $width={width}>
        <BigIcon>{icon}</BigIcon>
        <span>{text[0]}</span>
        <span>{text[1]}{menu && <Caret />}</span>
    </BigButton>
);

const Small = ({ icon, children, menu }) => (
    <SmallButton>
        <svg width="13" height="13" viewBox="0 0 13 13">{smallIcons[icon]}</svg>
        <span>{children}{menu && <Caret />}</span>
    </SmallButton>
);

const RibbonPanel = () => (
    <Ribbon>
        <Group>
            <GroupBody>
                <Big icon={<FxIcon />} text={['Insert', 'Function']} width={44} />
                <Divider />
                {library.map(item => <Big key={item.text[0]} {...item} menu />)}
            </GroupBody>
            <GroupLabel>Function Library</GroupLabel>
        </Group>
        <Group>
            <GroupBody>
                <Big icon={<NameManagerIcon />} text={['Name', 'Manager']} width={48} />
                <SmallColumn $width={131}>
                    <Small icon="define" menu>Define Name</Small>
                    <Small icon="use" menu>Use in Formula</Small>
                    <Small icon="create">Create from Selection</Small>
                </SmallColumn>
            </GroupBody>
            <GroupLabel>Defined Names</GroupLabel>
        </Group>
        <Group>
            <GroupBody>
                <SmallColumn $width={113}>
                    <Small icon="precedents">Trace Precedents</Small>
                    <Small icon="dependents">Trace Dependents</Small>
                    <Small icon="remove" menu>Remove Arrows</Small>
                </SmallColumn>
                <SmallColumn $width={107}>
                    <Small icon="show">Show Formulas</Small>
                    <Small icon="error" menu>Error Checking</Small>
                    <Small icon="evaluate">Evaluate Formula</Small>
                </SmallColumn>
                <Divider />
                <Big icon={<WatchIcon />} text={['Watch', 'Window']} width={46} />
            </GroupBody>
            <GroupLabel>Formula Auditing</GroupLabel>
        </Group>
        <Group>
            <GroupBody>
                <Big icon={<CalcOptionsIcon />} text={['Calculation', 'Options']} width={57} menu />
                <SmallColumn $width={98} $spread>
                    <Small icon="calcNow">Calculate Now</Small>
                    <Small icon="calcSheet">Calculate Sheet</Small>
                </SmallColumn>
            </GroupBody>
            <GroupLabel>Calculation</GroupLabel>
        </Group>
    </Ribbon>
);

const Sheet = () => (
    <Grid>
        <colgroup>
            <col width="29" />
            {columns.map(col => <col key={col} width={columnWidths[col]} />)}
        </colgroup>
        <thead>
            <tr>
                <Corner><CornerMark /></Corner>
                {columns.map(col => <ColumnHead key={col} $on={col === 'G'}>{col}</ColumnHead>)}
            </tr>
        </thead>
        <tbody>
            {Array.from({ length: ROWS }, (_, i) => i + 1).map(row => (
                <tr key={row}>
                    <RowHead $on={row === 1}>{row}</RowHead>
                    {columns.map(col => (
                        <Cell key={col}>
                            {cellText(row, col)}
                            {row === 1 && col === 'G' && <Selection />}
                        </Cell>
                    ))}
                </tr>
            ))}
        </tbody>
    </Grid>
);

export default function App() {
    return (
        <Window>
            <GlobalStyle />
            <OfficeButton aria-label="Office"><OfficeLogo /></OfficeButton>
            <TitleBar>
                <QuickAccess>
                    <QuickPill>
                        <button aria-label="Save"><SaveIcon /></button>
                        <button aria-label="Undo"><UndoIcon /></button>
                        <Caret />
                        <button aria-label="Redo"><UndoIcon flip /></button>
                        <Caret $color="#a9b6c9" />
                    </QuickPill>
                    <svg width="6" height="8" viewBox="0 0 6 8"><path d="M0 1 H6" stroke="#1d2c4a" strokeWidth="1.2" /><path d="M0 4 H6 L3 7.5 Z" fill="#1d2c4a" /></svg>
                </QuickAccess>
                <Title>STUDENT DATA - Microsoft Excel</Title>
                <WindowButtons $gap={38} $right={21}>
                    <button aria-label="Minimize"><MinIcon /></button>
                    <button aria-label="Restore"><RestoreIcon /></button>
                    <button aria-label="Close"><CloseIcon /></button>
                </WindowButtons>
            </TitleBar>
            <TabBar>
                {tabs.map(tab => <RibbonTab key={tab} $active={tab === 'Formulas'}>{tab}</RibbonTab>)}
                <WindowButtons $gap={14} $right={7}>
                    <button aria-label="Help"><HelpIcon /></button>
                    <button aria-label="Minimize workbook"><MinIcon small /></button>
                    <button aria-label="Restore workbook"><SmallRestoreIcon /></button>
                    <button aria-label="Close workbook"><CloseIcon small /></button>
                </WindowButtons>
            </TabBar>
            <RibbonPanel />
            <RibbonEdge />
            <FormulaBar>
                <NameBox aria-label="Name box" defaultValue="G1" />
                <NameCaret aria-label="Names">
                    <svg width="20" height="20" viewBox="0 0 20 20"><path d="M7 8.5 H14 L10.5 12.5 Z" fill="#000" /></svg>
                </NameCaret>
                <FxBox>
                    <Knob />
                    <svg width="12" height="14" viewBox="0 0 12 14">
                        <text x="1" y="11" fontFamily="Liberation Serif" fontStyle="italic" fontWeight="700" fontSize="14" fill="#4a4f58">fx</text>
                    </svg>
                </FxBox>
                <FormulaInput aria-label="Formula" />
                <ExpandButton aria-label="Expand formula bar">
                    <svg width="9" height="10" viewBox="0 0 9 10"><path d="M1 1 L4.5 4 L8 1 M1 5.5 L4.5 8.5 L8 5.5" fill="none" stroke="#111" strokeWidth="1.5" /></svg>
                </ExpandButton>
            </FormulaBar>
            <BarEdge />
            <SheetArea>
                <SheetView>
                    <Sheet />
                    <GreenBox $left={360} $top={138} $width={151} />
                    <GreenBox $left={511} $top={139} $width={205} />
                    <Callout $left={366} $top={101}>NAMES</Callout>
                    <Callout $left={526} $top={98}>REFERENCES</Callout>
                    <CalloutArrow $left={408} width="20" height="26"><DownArrow /></CalloutArrow>
                    <CalloutArrow $left={585} width="20" height="26"><DownArrow /></CalloutArrow>
                    <Watermark>
                        <WatermarkTitle>Activate Windows</WatermarkTitle>
                        Go to Settings to activate Windows.
                    </Watermark>
                </SheetView>
                <VScroll>
                    <Splitter />
                    <ScrollButton $width={16} $height={18} aria-label="Scroll up"><Arrow dir="up" color="#33486f" /></ScrollButton>
                    <Thumb $grow={14} $angle="90deg">
                        <svg width="8" height="7" viewBox="0 0 8 7"><path d="M0 1 H8 M0 3.5 H8 M0 6 H8" stroke="#7a879b" /></svg>
                    </Thumb>
                    <Track $grow={1} />
                    <ScrollButton $width={16} $height={18} aria-label="Scroll down"><Arrow dir="down" color="#33486f" /></ScrollButton>
                </VScroll>
            </SheetArea>
            <SheetBar>
                <SheetNav>
                    <button aria-label="First sheet"><Arrow dir="left" bar /></button>
                    <button aria-label="Previous sheet"><Arrow dir="left" /></button>
                    <button aria-label="Next sheet"><Arrow dir="right" /></button>
                    <button aria-label="Last sheet"><Arrow dir="right" bar /></button>
                </SheetNav>
                <SheetTab $pad={10}>MARK SHEET</SheetTab>
                <SheetTab $pad={7}>STUDENT DETAILS</SheetTab>
                <SheetTab $pad={8}>Sheet3</SheetTab>
                <SheetTab $pad={7} $active>Sheet1</SheetTab>
                <SheetTab $pad={8} aria-label="Insert sheet">
                    <svg width="13" height="12" viewBox="0 0 13 12">
                        <path d="M4 3 H12.5 V9 L10 11.5 H4.5 V8" fill="#f4f7fc" stroke="#566a8e" />
                        <path d="M3 0 V6 M0 3 H6 M1 1 L5 5 M5 1 L1 5" stroke="#ef9a1a" />
                    </svg>
                </SheetTab>
                <HScroll>
                    <Splitter $vertical />
                    <ScrollButton $width={18} $height={15} aria-label="Scroll left"><Arrow dir="left" color="#33486f" /></ScrollButton>
                    <Thumb $grow={33} $angle="180deg">
                        <svg width="7" height="7" viewBox="0 0 7 7"><path d="M1 0 V7 M3.5 0 V7 M6 0 V7" stroke="#7a879b" /></svg>
                    </Thumb>
                    <Track $grow={4} />
                    <ScrollButton $width={18} $height={15} aria-label="Scroll right"><Arrow dir="right" color="#33486f" /></ScrollButton>
                    <Splitter $vertical />
                </HScroll>
            </SheetBar>
            <StatusBar>
                <StatusItem $pad={6}>Ready</StatusItem>
                <StatusItem $pad={9}>
                    <svg width="14" height="12" viewBox="0 0 14 12">
                        <rect x="2.5" y="1.5" width="11" height="10" fill="#fff" stroke="#7185a8" />
                        <path d="M2 2.5 H14" stroke="#3d6fd6" strokeWidth="2" />
                        <path d="M3 6.5 H13 M3 9 H13 M6.5 4 V11 M10 4 V11" stroke="#b4c2d8" />
                        <circle cx="2.8" cy="2.8" r="2.6" fill="#d8432b" />
                    </svg>
                </StatusItem>
                <ZoomArea>
                    <Views>
                        <ViewButton $on aria-label="Normal view">
                            <svg width="13" height="11" viewBox="0 0 13 11"><rect x="0.5" y="0.5" width="12" height="10" fill="#fff" stroke="#5f5f5f" /><path d="M0 3.5 H13 M0 7 H13 M4.5 0 V11 M8.5 0 V11" stroke="#5f5f5f" /></svg>
                        </ViewButton>
                        <ViewButton aria-label="Page layout view">
                            <svg width="13" height="12" viewBox="0 0 13 12"><rect x="0.5" y="0.5" width="12" height="11" fill="#9a9fa8" stroke="#6e737c" /><rect x="3" y="2" width="7" height="8" fill="#fff" /><path d="M4.5 4.5 H8.5 M4.5 6.5 H8.5 M4.5 8.5 H8.5" stroke="#666" strokeWidth="0.8" /></svg>
                        </ViewButton>
                        <ViewButton aria-label="Page break view">
                            <svg width="13" height="12" viewBox="0 0 13 12"><rect x="0.5" y="0.5" width="12" height="11" fill="#a9adb5" stroke="#6e737c" /><path d="M1 1 H5 V7 H1 Z M6.5 1 H10 V7 H6.5 Z" fill="#fff" /></svg>
                        </ViewButton>
                    </Views>
                    <ZoomLabel htmlFor="zoom">100%</ZoomLabel>
                    <RoundButton aria-label="Zoom out"><svg width="8" height="8" viewBox="0 0 8 8"><path d="M0.5 4 H7.5" stroke="#222" strokeWidth="1.5" /></svg></RoundButton>
                    <ZoomSlider id="zoom" type="range" min="0" max="200" defaultValue="100" />
                    <RoundButton aria-label="Zoom in"><svg width="8" height="8" viewBox="0 0 8 8"><path d="M0.5 4 H7.5 M4 0.5 V7.5" stroke="#222" strokeWidth="1.5" /></svg></RoundButton>
                </ZoomArea>
            </StatusBar>
            <Taskbar>
                <StartButton aria-label="Start"><StartIcon /></StartButton>
                <SearchInput aria-label="Search" placeholder="Search the web and Windows" />
                <TaskButtons>
                    <TaskButton aria-label="Task view"><TaskViewIcon /></TaskButton>
                    <TaskButton $open aria-label="File Explorer"><ExplorerIcon /></TaskButton>
                    <TaskButton aria-label="Store"><StoreIcon /></TaskButton>
                    <TaskButton $open aria-label="Word"><WordIcon /></TaskButton>
                    <TaskButton $open aria-label="Hotspot"><WifiAppIcon /></TaskButton>
                    <TaskButton $open aria-label="Chrome"><ChromeIcon /></TaskButton>
                    <TaskButton $active aria-label="Excel"><ExcelIcon /></TaskButton>
                </TaskButtons>
                <Tray>
                    <svg width="14" height="8" viewBox="0 0 14 8"><path d="M0.5 7.5 L7 1 L13.5 7.5" fill="none" stroke="#fff" strokeWidth="1.3" /></svg>
                    <svg width="14" height="14" viewBox="0 0 14 14">
                        <path d="M1 13 Q1 2 13 1.5 M4 13 Q4 5.5 13 5" fill="none" stroke="#a9a9a9" strokeWidth="1.2" />
                        <path d="M7 13 Q7 9 13 8.5" fill="none" stroke="#fff" strokeWidth="1.3" />
                        <rect x="10" y="11" width="3" height="3" fill="#fff" />
                    </svg>
                    <svg width="18" height="14" viewBox="0 0 18 14">
                        <path d="M0.6 4.5 H3 L7 1 V13 L3 9.5 H0.6 Z" fill="none" stroke="#fff" strokeWidth="1.1" />
                        <path d="M9.5 5 Q11 7 9.5 9 M12 3 Q15 7 12 11 M14.5 1 Q19 7 14.5 13" fill="none" stroke="#fff" strokeWidth="1.1" />
                    </svg>
                    <svg width="18" height="17" viewBox="0 0 18 17">
                        <path d="M0 0 H18 V13 H12 L9 16.5 V13 H0 Z" fill="#fff" />
                        <path d="M4 4 H14 M4 6.5 H14 M4 9 H11" stroke="#222" />
                    </svg>
                    <Clock>9:30 AM<br />4/10/2020</Clock>
                </Tray>
            </Taskbar>
        </Window>
    );
}
